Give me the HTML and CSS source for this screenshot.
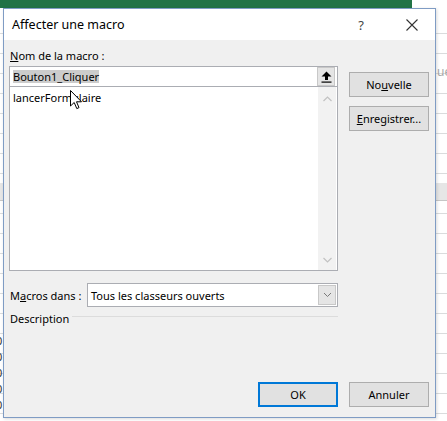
FILE: index.html
```html
<!DOCTYPE html>
<html lang="fr">
<head>
<meta charset="utf-8">
<title>Affecter une macro</title>
<link rel="stylesheet" href="styles.css">
</head>
<body>
<div class="desktop">
  <div class="excel">
    <div class="ribbon"></div>
    <div class="sheet">
      <div class="ghost-text">ue</div>
      <div class="header-band"></div>
      <div class="left-digits">
        <span>0</span><span>0</span><span>0</span><span>0</span><span>0</span>
      </div>
    </div>
  </div>

  <div class="dialog">
    <div class="titlebar">
      <span class="title">Affecter une macro</span>
      <span class="help">?</span>
      <svg class="close" width="12" height="12" viewBox="0 0 12 12"><path d="M0.5 0.5 L11.5 11.5 M11.5 0.5 L0.5 11.5" stroke="#333" stroke-width="1.1" fill="none"/></svg>
    </div>
    <div class="body">
      <div class="main">
        <div class="leftcol">
          <div class="label"><u>N</u>om de la macro :</div>
          <div class="input">
            <span class="sel">Bouton1_Cliquer</span>
            <span class="upbtn">
              <svg width="11" height="12" viewBox="0 0 11 12"><path d="M5.5 0.5 L10.5 5.5 L7 5.5 L7 9 L4 9 L4 5.5 L0.5 5.5 Z" fill="#000"/><rect x="0.5" y="10.5" width="10" height="1.2" fill="#000"/></svg>
            </span>
          </div>
          <div class="list">
            <div class="items">
              <div class="item">lancerFormulaire</div>
            </div>
            <div class="scrollbar">
              <svg width="9" height="6" viewBox="0 0 9 6"><path d="M0.5 5 L4.5 1 L8.5 5" stroke="#c2c2c2" stroke-width="1.2" fill="none"/></svg>
              <svg width="9" height="6" viewBox="0 0 9 6"><path d="M0.5 1 L4.5 5 L8.5 1" stroke="#c2c2c2" stroke-width="1.2" fill="none"/></svg>
            </div>
          </div>
          <div class="inrow">
            <span class="inlabel">M<u>a</u>cros dans :</span>
            <div class="select">
              <span class="seltext">Tous les classeurs ouverts</span>
              <span class="dropbtn">
                <svg width="9" height="6" viewBox="0 0 9 6"><path d="M1 1 L4.5 4.5 L8 1" stroke="#7a7a7a" stroke-width="1" fill="none"/></svg>
              </span>
            </div>
          </div>
          <div class="descrow">
            <span>Description</span>
            <span class="rule"></span>
          </div>
        </div>
        <div class="rightcol">
          <button class="btn">No<u>u</u>velle</button>
          <button class="btn"><u>E</u>nregistrer...</button>
        </div>
      </div>
      <div class="footer">
        <button class="btn default">OK</button>
        <button class="btn">Annuler</button>
      </div>
    </div>
  </div>

  <svg class="cursor" width="13" height="20" viewBox="0 0 13 20"><path d="M0.5 0.5 L0.5 16 L4.2 12.5 L6.8 18.6 L9 17.6 L6.5 11.8 L11.5 11.8 Z" fill="#fff" stroke="#000" stroke-width="1" stroke-linejoin="round"/></svg>
</div>
</body>
</html>
```

FILE: styles.css
```css
* { box-sizing: border-box; }
html, body { margin: 0; padding: 0; }
body {
  width: 447px;
  height: 421px;
  overflow: hidden;
  font-family: "Noto Sans", "Open Sans", sans-serif;
  font-size: 11px;
  color: #000;
}
.desktop {
  position: relative;
  width: 447px;
  height: 421px;
  background: #fff;
}
.excel {
  display: flex;
  flex-direction: column;
  height: 100%;
}
.ribbon {
  height: 8px;
  width: 412px;
  background: #217346;
}
.sheet {
  position: relative;
  flex: 1;
  background-color: #fff;
  background-image: repeating-linear-gradient(to bottom, transparent 0, transparent 19px, #dadcdd 19px, #dadcdd 20px);
  background-position: 0 6px;
}
.ghost-text {
  position: absolute;
  left: 437px;
  top: 57px;
  color: #a8a8a8;
  font-size: 12px;
  line-height: 14px;
}
.header-band {
  position: absolute;
  left: 0;
  right: 0;
  top: 175px;
  height: 18px;
  background: #e6e6e6;
  border-bottom: 1px solid #c6c6c6;
}
.left-digits {
  position: absolute;
  left: -4px;
  top: 326px;
  display: flex;
  flex-direction: column;
  gap: 2px;
  font-size: 11px;
  line-height: 14px;
  color: #333;
}

.dialog {
  position: absolute;
  left: 3px;
  top: 8px;
  width: 433px;
  height: 410px;
  border: 1px solid #7f9cc4;
  background: #f0f0f0;
  display: flex;
  flex-direction: column;
  box-shadow: 1px 1px 3px rgba(0,0,0,0.15);
}
.titlebar {
  height: 31px;
  flex: none;
  background: #fff;
  display: flex;
  align-items: center;
  padding-left: 8px;
}
.title {
  font-size: 12.5px;
  flex: 1;
  color: #000;
}
.help {
  font-size: 13px;
  color: #444;
  margin-right: 42px;
}
.close { margin-right: 17px; }

.body {
  flex: 1;
  display: flex;
  flex-direction: column;
  padding: 6px 6px 10px 5px;
}
.main {
  display: flex;
  gap: 11px;
}
.leftcol {
  width: 329px;
  display: flex;
  flex-direction: column;
}
.label {
  height: 20px;
  line-height: 20px;
  padding-left: 1px;
}
.input {
  height: 21px;
  border: 1px solid #abadb3;
  background: #fff;
  display: flex;
  align-items: center;
  justify-content: space-between;
  padding: 0 2px 0 3px;
}
.sel {
  background: #cccccc;
  line-height: 13px;
}
.upbtn {
  width: 18px;
  height: 19px;
  background: #e5e5e5;
  border: 1px solid #c8c8c8;
  display: flex;
  align-items: center;
  justify-content: center;
}
.list {
  height: 184px;
  border: 1px solid #abadb3;
  border-top: none;
  background: #fff;
  display: flex;
}
.items {
  flex: 1;
  padding: 3px 3px;
}
.item { line-height: 16px; }
.scrollbar {
  width: 18px;
  margin: 0 1px 0 0;
  background: #f2f2f2;
  display: flex;
  flex-direction: column;
  justify-content: space-between;
  align-items: center;
  padding: 9px 0 7px;
}
.inrow {
  margin-top: 12px;
  display: flex;
  align-items: center;
}
.inlabel {
  width: 78px;
  padding-left: 1px;
  white-space: nowrap;
}
.select {
  flex: 1;
  height: 24px;
  border: 1px solid #abadb3;
  background: #fff;
  display: flex;
  align-items: center;
  justify-content: space-between;
  padding: 1px 1px 1px 3px;
}
.dropbtn {
  width: 18px;
  height: 20px;
  background: #e5e5e5;
  border: 1px solid #c8c8c8;
  display: flex;
  align-items: center;
  justify-content: center;
}
.descrow {
  margin-top: 2px;
  display: flex;
  align-items: center;
  gap: 3px;
  height: 18px;
  padding-left: 1px;
}
.rule {
  flex: 1;
  height: 1px;
  background: #dcdcdc;
  margin-top: -4px;
}
.rightcol {
  width: 80px;
  padding-top: 26px;
  display: flex;
  flex-direction: column;
  gap: 9px;
}
.btn {
  width: 80px;
  height: 25px;
  border: 1px solid #adadad;
  background: #e1e1e1;
  font-family: inherit;
  font-size: 11px;
  color: #000;
  padding: 0;
}
.btn.default {
  border: 2px solid #0078d7;
}
.footer {
  margin-top: auto;
  display: flex;
  justify-content: flex-end;
  gap: 11px;
}
.cursor {
  position: absolute;
  left: 70px;
  top: 90px;
}
```
